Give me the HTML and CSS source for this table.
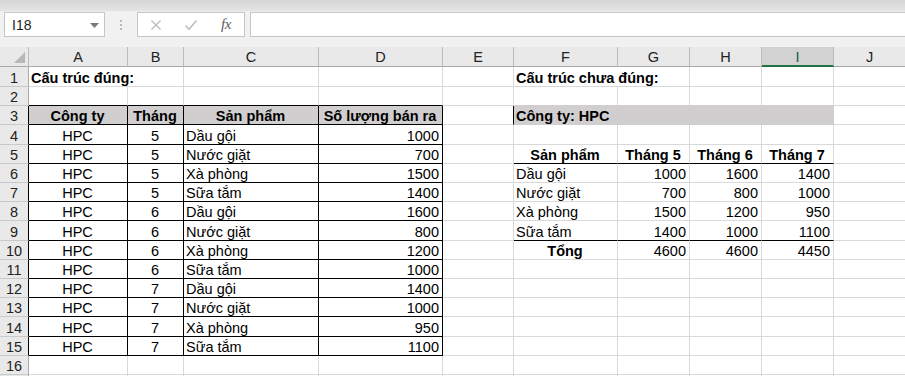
FILE: index.html
```html
<!DOCTYPE html>
<html lang="vi">
<head>
<meta charset="utf-8">
<title>Cấu trúc dữ liệu</title>
<link rel="stylesheet" href="styles.css">
</head>
<body>
<header class="toolbar">
  <div class="strip"></div>
  <div class="fbar">
    <div class="namebox">
      <span class="ref">I18</span>
      <svg class="dd" width="9" height="5" viewBox="0 0 9 5"><path d="M0 0h9L4.5 5z" fill="#7a7a7a"/></svg>
    </div>
    <div class="grip"><i></i><i></i><i></i></div>
    <div class="fxbox">
      <svg width="12" height="12" viewBox="0 0 12 12"><path d="M1.5 1.5l9 9M10.5 1.5l-9 9" stroke="#bdbdbd" stroke-width="1.4" fill="none"/></svg>
      <svg width="14" height="12" viewBox="0 0 14 12"><path d="M1.5 6.5l3.5 3.8L12.5 1.5" stroke="#bdbdbd" stroke-width="1.5" fill="none"/></svg>
      <span class="fx">fx</span>
    </div>
    <div class="formula"></div>
  </div>
  <div class="gap"></div>
</header>

<main class="sheet">
  <div class="row">
    <div class="corner"><svg width="11" height="11" viewBox="0 0 11 11"><path d="M11 0v11H0z" fill="#b7b7b7"/></svg></div>
    <div class="ch">A</div><div class="ch">B</div><div class="ch">C</div><div class="ch">D</div><div class="ch">E</div>
    <div class="ch">F</div><div class="ch">G</div><div class="ch">H</div><div class="ch sel">I</div><div class="ch">J</div>
  </div>

  <div class="row">
    <div class="rh">1</div>
    <div class="b span2">Cấu trúc đúng:</div><div></div><div></div><div></div>
    <div class="b span2">Cấu trúc chưa đúng:</div><div></div><div></div><div></div>
  </div>

  <div class="row">
    <div class="rh">2</div>
    <div class="kb"></div><div class="kb"></div><div class="kb"></div><div class="kb"></div><div></div>
    <div class="fb"></div><div class="fb"></div><div class="fb"></div><div class="fb"></div><div></div>
  </div>

  <div class="row">
    <div class="rh k">3</div>
    <div class="t th c">Công ty</div><div class="t th c">Tháng</div><div class="t th c">Sản phẩm</div><div class="t th c">Số lượng bán ra</div>
    <div class="fr"></div>
    <div class="fill b span4">Công ty: HPC</div><div></div>
  </div>

  <div class="row">
    <div class="rh k">4</div>
    <div class="t c">HPC</div><div class="t c">5</div><div class="t">Dầu gội</div><div class="t r">1000</div>
    <div></div><div></div><div></div><div></div><div></div><div></div>
  </div>

  <div class="row">
    <div class="rh k">5</div>
    <div class="t c">HPC</div><div class="t c">5</div><div class="t">Nước giặt</div><div class="t r">700</div>
    <div></div>
    <div class="kb b c">Sản phẩm</div><div class="kb b c">Tháng 5</div><div class="kb b c">Tháng 6</div><div class="kb b c">Tháng 7</div>
    <div></div>
  </div>

  <div class="row">
    <div class="rh k">6</div>
    <div class="t c">HPC</div><div class="t c">5</div><div class="t">Xà phòng</div><div class="t r">1500</div>
    <div></div>
    <div>Dầu gội</div><div class="r">1000</div><div class="r">1600</div><div class="r">1400</div>
    <div></div>
  </div>

  <div class="row">
    <div class="rh k">7</div>
    <div class="t c">HPC</div><div class="t c">5</div><div class="t">Sữa tắm</div><div class="t r">1400</div>
    <div></div>
    <div>Nước giặt</div><div class="r">700</div><div class="r">800</div><div class="r">1000</div>
    <div></div>
  </div>

  <div class="row">
    <div class="rh k">8</div>
    <div class="t c">HPC</div><div class="t c">6</div><div class="t">Dầu gội</div><div class="t r">1600</div>
    <div></div>
    <div>Xà phòng</div><div class="r">1500</div><div class="r">1200</div><div class="r">950</div>
    <div></div>
  </div>

  <div class="row">
    <div class="rh k">9</div>
    <div class="t c">HPC</div><div class="t c">6</div><div class="t">Nước giặt</div><div class="t r">800</div>
    <div></div>
    <div class="kb">Sữa tắm</div><div class="kb r">1400</div><div class="kb r">1000</div><div class="kb r">1100</div>
    <div></div>
  </div>

  <div class="row">
    <div class="rh k">10</div>
    <div class="t c">HPC</div><div class="t c">6</div><div class="t">Xà phòng</div><div class="t r">1200</div>
    <div></div>
    <div class="b c">Tổng</div><div class="r">4600</div><div class="r">4600</div><div class="r">4450</div>
    <div></div>
  </div>

  <div class="row">
    <div class="rh k">11</div>
    <div class="t c">HPC</div><div class="t c">6</div><div class="t">Sữa tắm</div><div class="t r">1000</div>
    <div></div><div></div><div></div><div></div><div></div><div></div>
  </div>

  <div class="row">
    <div class="rh k">12</div>
    <div class="t c">HPC</div><div class="t c">7</div><div class="t">Dầu gội</div><div class="t r">1400</div>
    <div></div><div></div><div></div><div></div><div></div><div></div>
  </div>

  <div class="row">
    <div class="rh k">13</div>
    <div class="t c">HPC</div><div class="t c">7</div><div class="t">Nước giặt</div><div class="t r">1000</div>
    <div></div><div></div><div></div><div></div><div></div><div></div>
  </div>

  <div class="row">
    <div class="rh k">14</div>
    <div class="t c">HPC</div><div class="t c">7</div><div class="t">Xà phòng</div><div class="t r">950</div>
    <div></div><div></div><div></div><div></div><div></div><div></div>
  </div>

  <div class="row">
    <div class="rh k">15</div>
    <div class="t c">HPC</div><div class="t c">7</div><div class="t">Sữa tắm</div><div class="t r">1100</div>
    <div></div><div></div><div></div><div></div><div></div><div></div>
  </div>

  <div class="row">
    <div class="rh">16</div>
    <div></div><div></div><div></div><div></div><div></div><div></div><div></div><div></div><div></div><div></div>
  </div>

  <div class="row">
    <div class="rh"></div>
    <div></div><div></div><div></div><div></div><div></div><div></div><div></div><div></div><div></div><div></div>
  </div>
</main>
</body>
</html>
```
FILE: styles.css
```css
html, body {
  margin: 0;
  padding: 0;
}

body {
  width: 905px;
  height: 376px;
  overflow: hidden;
  background: #fff;
  font-family: "Liberation Sans", Arial, sans-serif;
  color: #000;
}

/* ---------- formula bar ---------- */
.toolbar {
  display: flex;
  flex-direction: column;
  background: #f1f1f1;
}

.strip {
  height: 12px;
  background: linear-gradient(#d6d6d6, #e4e4e4);
  border-bottom: 1px solid #ececec;
  box-sizing: border-box;
}

.fbar {
  height: 25px;
  display: flex;
  align-items: stretch;
  padding-left: 4px;
}

.namebox {
  width: 101px;
  box-sizing: border-box;
  border: 1px solid #c6c6c6;
  background: #fff;
  display: flex;
  align-items: center;
  justify-content: space-between;
  padding: 0 5px 0 7px;
  font-size: 14px;
  color: #1e1e1e;
}

.namebox .dd {
  margin-top: 1px;
}

.grip {
  width: 32px;
  display: flex;
  flex-direction: column;
  align-items: center;
  justify-content: center;
  gap: 2px;
}

.grip i {
  width: 2px;
  height: 2px;
  background: #b9b9b9;
}

.fxbox {
  width: 108px;
  box-sizing: border-box;
  border: 1px solid #c6c6c6;
  background: #fff;
  display: flex;
  align-items: center;
  padding: 0 0 0 12px;
  gap: 22px;
}

.fx {
  font-family: "Liberation Serif", "Times New Roman", serif;
  font-style: italic;
  font-size: 15px;
  color: #5a5a5a;
  letter-spacing: -0.5px;
  margin-left: 1px;
}

.formula {
  flex: 1;
  margin-left: 5px;
  border: 1px solid #c6c6c6;
  border-right: none;
  background: #fff;
}

.gap {
  height: 10px;
}

/* ---------- worksheet grid ---------- */
.sheet {
  display: grid;
  grid-template-columns: 29px 99px 56px 135px 124px 71px 104px 72px 72px 72px 72px;
  grid-template-rows: 20px 20px 19px 19px 20px 19px 19px 19px 19px 20px 19px 19px 19px 19px 20px 19px 19px 19px;
  font-size: 14.5px;
}

.row {
  display: contents;
}

.row > div {
  box-sizing: border-box;
  border-right: 1px solid #d9d9d9;
  border-bottom: 1px solid #d9d9d9;
  display: flex;
  align-items: flex-end;
  padding: 0 3px 0 2px;
  white-space: nowrap;
  min-width: 0;
}

/* headers */
.row > .ch,
.row > .corner {
  background: #e9e9e9;
  border-right: 1px solid #bcbcbc;
  border-bottom: 1px solid #a9a9a9;
  justify-content: center;
  align-items: center;
  color: #222;
  padding: 1px 0 0;
}

.row > .corner {
  justify-content: flex-end;
  align-items: flex-end;
  padding: 0 3px 3px 0;
}

.row > .ch.sel {
  background: #d2d2d2;
  color: #1d5a36;
  border-bottom: 2px solid #217346;
}

.row > .rh {
  background: #e9e9e9;
  border-right: 1px solid #a9a9a9;
  border-bottom: 1px solid #c9c9c9;
  justify-content: center;
  color: #222;
  padding: 0;
}

.row > .rh.k {
  border-right-color: #000;
}

/* cell formats */
.b { font-weight: bold; }
.c { justify-content: center; }
.r { justify-content: flex-end; }

.span2 { grid-column: span 2; }
.span4 { grid-column: span 4; }

.row > .t {
  border-right-color: #000;
  border-bottom-color: #000;
}

.row > .th {
  background: #d0cece;
  font-weight: bold;
}

.row > .kb {
  border-bottom-color: #000;
}

.row > .fill {
  background: #d0cece;
  border-right-color: #d0cece;
  border-bottom-color: #d0cece;
}

.row > .fb {
  border-bottom-color: #d0cece;
}

.row > .fr {
  border-right-color: #000;
}
```
